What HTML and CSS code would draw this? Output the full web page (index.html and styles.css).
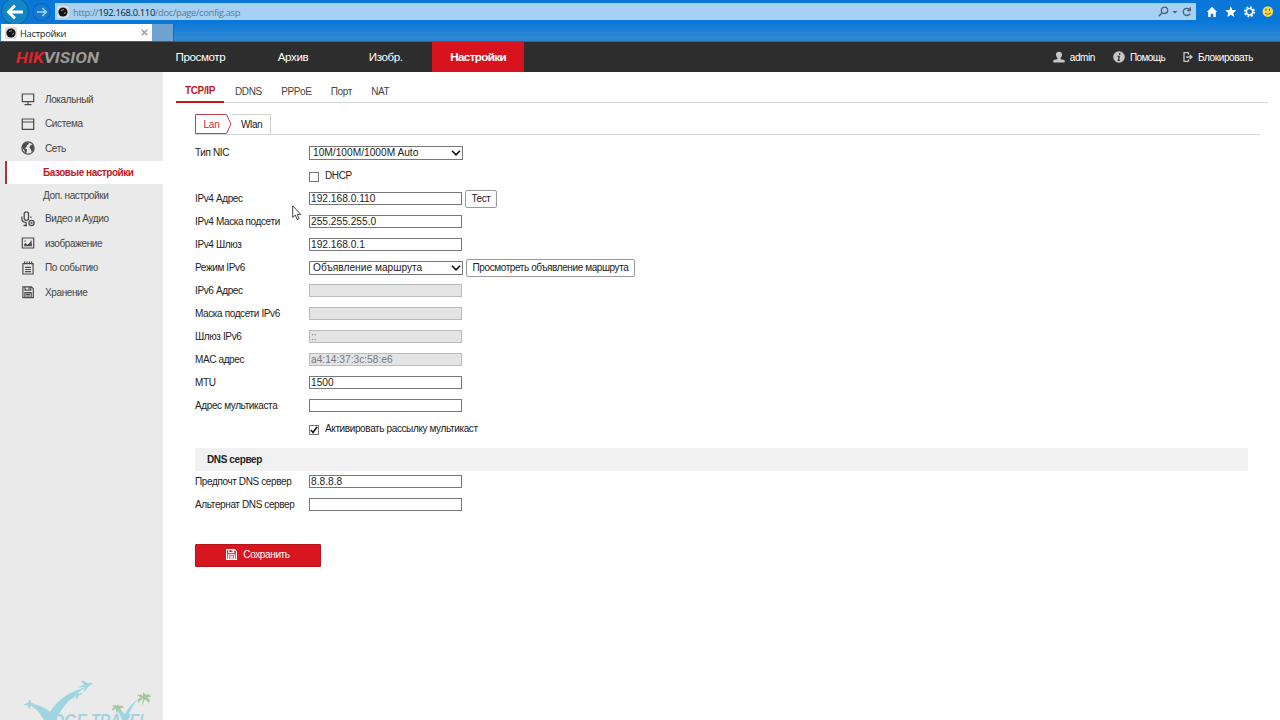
FILE: index.html
```html
<!DOCTYPE html>
<html lang="ru">

<head>
    <meta charset="UTF-8">
    <title>Настройки</title>
    <link rel="stylesheet" href="styles.css">
</head>

<body>
    <!-- Browser bar -->
    <div class="browser">
        <div class="address-row">
            <svg class="back" width="29" height="24" viewBox="0 0 29 24">
                <circle cx="15" cy="11.5" r="13.5" fill="#1186c4" stroke="#0a60a4" />
                <path d="M23 12H9M15 5.5L8.5 12l6.5 6.5" fill="none" stroke="#fff" stroke-width="3" />
            </svg>
            <svg class="forward" width="19" height="24" viewBox="0 0 19 24">
                <circle cx="9.5" cy="12" r="8.5" fill="#1379d3" stroke="#0b62b4" />
                <path d="M5 12h9M10.3 8l4 4-4 4" fill="none" stroke="#a9d6f6" stroke-width="1.5" />
            </svg>
            <div class="address">
                <svg class="favicon" width="12" height="12" viewBox="0 0 12 12">
                    <rect width="12" height="12" rx="2" fill="#ddd" />
                    <circle cx="6" cy="6" r="4.6" fill="#151515" />
                    <path d="M4 4.5l3-1M7 7.5l2-1" stroke="#999" />
                </svg>
                <span class="url">http://<b>192.168.0.110</b>/doc/page/config.asp</span>
                <svg class="address-tools" width="36" height="14" viewBox="0 0 36 14">
                    <g fill="none" stroke="#47637f" stroke-width="1.3">
                        <circle cx="7.5" cy="5.3" r="3.2" />
                        <path d="M5.2 7.7L1.7 11.3" />
                        <path d="M32.8 4.9A3.6 3.6 0 1 0 33 8.6M33.3 2.3v3.2h-3.2" />
                    </g>
                    <path d="M15.5 6h5L18 8.6z" fill="#47637f" />
                </svg>
            </div>
            <svg class="browser-icons" width="72" height="14" viewBox="0 0 72 14">
                <path d="M.9 7L6 1.8 11.1 7H9.8v5H7.3V8.7H4.7V12H2.2V7z" fill="#fff" />
                <path d="M24.8 1.2l1.5 3.8 4.1.3-3.1 2.7 1 4-3.5-2.2-3.5 2.2 1-4-3.1-2.7 4.1-.3z" fill="#fff" />
                <circle cx="43.5" cy="6.8" r="3.2" fill="none" stroke="#fff" stroke-width="1.5" />
                <circle cx="43.5" cy="6.8" r="4.7" fill="none" stroke="#fff" stroke-width="1.8" stroke-dasharray="1.8 1.89" />
                <circle cx="61.8" cy="6.6" r="5.3" fill="#fbd94e" />
                <path d="M59 8q2.8 3 5.6 0" fill="none" stroke="#8c6a12" />
                <path d="M60 3.8v2M63.5 3.8v2" stroke="#6d5211" stroke-width="1.1" />
            </svg>
        </div>
        <div class="tabs-row">
            <div class="browser-tab">
                <svg class="favicon" width="12" height="12" viewBox="0 0 12 12">
                    <rect width="12" height="12" rx="2" fill="#ddd" />
                    <circle cx="6" cy="6" r="4.6" fill="#151515" />
                    <path d="M4 4.5l3-1M7 7.5l2-1" stroke="#999" />
                </svg>
                <span>Настройки</span>
                <svg class="tab-close" width="7" height="7" viewBox="0 0 7 7">
                    <path d="M.7.7l5.6 5.6M6.3.7L.7 6.3" stroke="#999" stroke-width="1.3" />
                </svg>
            </div>
            <div class="new-tab"></div>
        </div>
    </div>

    <!-- Header -->
    <div class="header">
        <svg class="logo" width="90" height="22" viewBox="0 0 90 22">
            <text class="logo-text" x="0" y="16.5" textLength="83" lengthAdjust="spacingAndGlyphs"><tspan fill="#d8262d">HIK</tspan><tspan fill="#9b9b9b">VISION</tspan></text>
        </svg>
        <div class="menu">
            <a href="#">Просмотр</a>
            <a href="#">Архив</a>
            <a href="#">Изобр.</a>
            <a href="#" class="active">Настройки</a>
        </div>
        <div class="user-menu">
            <a href="#" class="user">
                <svg width="12" height="12" viewBox="0 0 12 12" fill="#c6c6c6">
                    <path d="M6 .8c-1.9 0-3 1.2-3 3 0 1.3.6 2.5 1.5 3.1v1.2L.3 9.3v2.2h11.4V9.3L7.5 8.1V6.9C8.4 6.3 9 5.1 9 3.8c0-1.8-1.1-3-3-3z" />
                </svg>
                <span>admin</span>
            </a>
            <a href="#" class="help">
                <svg width="12" height="12" viewBox="0 0 12 12">
                    <circle cx="6" cy="6" r="5.8" fill="#c6c6c6" />
                    <path d="M6.8 2.2L6.5 3.8M4.6 5.3h1.6l-.8 4h1.5" fill="none" stroke="#333" stroke-width="1.3" />
                </svg>
                <span>Помощь</span>
            </a>
            <a href="#" class="lock">
                <svg width="10" height="10" viewBox="0 0 10 10" fill="none" stroke="#c6c6c6" stroke-width="1.3">
                    <path d="M5.8.7H1v8.6h4.8M5.5.7v2M5.5 7.3v2M3.2 5h5.6M6.8 3l2.2 2-2.2 2" />
                </svg>
                <span>Блокировать</span>
            </a>
        </div>
    </div>

    <div class="page">
        <!-- Left menu -->
        <div class="sidebar">
            <a href="#" class="item">
                <svg width="14" height="14" viewBox="0 0 14 14" fill="none" stroke="#4b4b4b" stroke-width="1.2">
                    <path d="M1.3 2h11.4v7.6H1.3zM7 9.6v3M3.5 12.6h7" />
                </svg>
                <span>Локальный</span>
            </a>
            <a href="#" class="item">
                <svg width="14" height="14" viewBox="0 0 14 14" fill="none" stroke="#4b4b4b" stroke-width="1.2">
                    <path d="M1.3 2h11.4v10.4H1.3zM1.3 5h11.4" />
                </svg>
                <span>Система</span>
            </a>
            <a href="#" class="item">
                <svg width="14" height="14" viewBox="0 0 14 14">
                    <circle cx="7" cy="7" r="6.1" fill="none" stroke="#4b4b4b" stroke-width="1.2" />
                    <path d="M2 3.5L5 1.2l3 .6-.5 1.7L6 4l-.5 2.2L3.5 7l2.5 1.5-.5 3.3L4 12 3.3 9 .8 6.8zM9.5 4.2l2-.7 1.5 3-1 3-1.5 1.3L9.700 8 8.300 6.500z" fill="#4b4b4b" />
                </svg>
                <span>Сеть</span>
            </a>
            <a href="#" class="sub-item active">Базовые настройки</a>
            <a href="#" class="sub-item">Доп. настройки</a>
            <a href="#" class="item">
                <svg width="14" height="16" viewBox="0 0 14 16" fill="none" stroke="#4b4b4b" stroke-width="1.3">
                    <rect x="3.2" y=".8" width="4.3" height="8.5" rx="2.1" />
                    <path d="M.9 5.5v2q0 4 4.3 4M5.2 11.5v3M2.5 14.5H6M9.8 5.5v1.5" />
                    <circle cx="10.5" cy="12" r="2.6" />
                    <circle cx="10.5" cy="12" r=".4" />
                </svg>
                <span>Видео и Аудио</span>
            </a>
            <a href="#" class="item">
                <svg width="14" height="14" viewBox="0 0 14 14">
                    <path d="M1.3 2h11.4v10H1.3z" fill="none" stroke="#4b4b4b" stroke-width="1.2" />
                    <path d="M3.2 10.3V8l1.3-1 1.5 1.5h.8L9.5 6V4.5h1l.5 5.8zM3.5 4.5h1.2v1.2H3.5z" fill="#4b4b4b" />
                </svg>
                <span>изображение</span>
            </a>
            <a href="#" class="item">
                <svg width="14" height="14" viewBox="0 0 14 14" fill="none" stroke="#4b4b4b" stroke-width="1.2">
                    <path d="M1.9 2.5h10.2V13H1.9zM3.6.5v3M6 .5v3M8.4.5v3M10.7.5v3M4 6.3h6M4 8.5h6M4 10.7h6" />
                </svg>
                <span>По событию</span>
            </a>
            <a href="#" class="item">
                <svg width="14" height="14" viewBox="0 0 14 14" fill="none" stroke="#4b4b4b" stroke-width="1.2">
                    <path d="M1.9 1.8h8.5l1.9 1.9v8.9H1.9zM4 1.8v3.4h5.8V1.8M8 2.2v2M3.9 12.5V7.7h6.3v4.8M5 9.3h4M5 11h4" />
                </svg>
                <span>Хранение</span>
            </a>
            <!-- Watermark -->
            <svg class="watermark" width="140" height="42" viewBox="0 0 140 42">
                <g fill="#9fd4e1">
                    <path d="M5 26Q15 29 22 42h12Q42 23 64 9Q39 16 28 34Q18 25 5 26z" />
                    <path d="M32 42Q40 25 56 17Q43 19 35 29L27 42z" />
                    <path d="M55 9l7-2-3-4 2-.5 5 3 4-1 1 1-4 2.5-4 5-1.5.5 1.500-4.500-5 .5zM49 17l5-.5-2-3h1.500l3.500 2 3-.5v1l-3 1.500-2 3.500-1 .5.3-4-4.300.5zM1 26.500l5-1.500 1-3h1.500l.5 3 3 .5-3 2-1 3h-1.500V28z" />
                </g>
                <text class="mark-text" x="31" y="48.5" textLength="34" lengthAdjust="spacingAndGlyphs">DGE</text>
                <text class="mark-text" x="69" y="48.5" textLength="57" lengthAdjust="spacingAndGlyphs">TRAVEL</text>
                <path d="M93 31q5 4 7 11h5q4-16 15-24-12 8-17 18-4-4-10-6z" fill="#9fd4e1" />
                <path d="M120 28l1-8-5 5q-1-4 3-6l-4-1q3-3 6 0v-4l3 3q4-2 5 2h-4q4 3 2 6l-4-4zM94 36v-6l-4 3q0-4 3-4l-3-1q3-2 5 0l1-2 1 2q4-1 5 2h-4q2 2 1 4l-3-3z" fill="#a6c6a0" />
            </svg>
        </div>

        <!-- Settings -->
        <div class="content">
            <div class="tabs">
                <a href="#" class="tab active">TCP/IP</a>
                <a href="#" class="tab">DDNS</a>
                <a href="#" class="tab">PPPoE</a>
                <a href="#" class="tab">Порт</a>
                <a href="#" class="tab">NAT</a>
            </div>
            <div class="form">
                <div class="steps">
                    <svg class="step-shape" width="37" height="20" viewBox="0 0 37 20">
                        <path d="M.5.5h31l4.5 9.5-4.5 9.5H.5z" fill="#fff" stroke="#c4404a" />
                        <text class="step-text" x="8.5" y="13.5">Lan</text>
                    </svg>
                    <div class="step">Wlan</div>
                </div>

                <div class="row">
                    <label>Тип NIC</label>
                    <div class="select">10M/100M/1000M Auto<svg width="10" height="6" viewBox="0 0 10 6"><path d="M1 .8l4 4 4-4" /></svg></div>
                </div>
                <div class="row">
                    <label></label>
                    <span class="check"></span>
                    <span class="check-label">DHCP</span>
                </div>
                <div class="row">
                    <label>IPv4 Адрес</label>
                    <input type="text" value="192.168.0.110">
                    <button class="btn test">Тест</button>
                </div>
                <div class="row">
                    <label>IPv4 Маска подсети</label>
                    <input type="text" value="255.255.255.0">
                </div>
                <div class="row">
                    <label>IPv4 Шлюз</label>
                    <input type="text" value="192.168.0.1">
                </div>
                <div class="row">
                    <label>Режим IPv6</label>
                    <div class="select">Объявление маршрута<svg width="10" height="6" viewBox="0 0 10 6"><path d="M1 .8l4 4 4-4" /></svg></div>
                    <button class="btn route">Просмотреть объявление маршрута</button>
                </div>
                <div class="row">
                    <label>IPv6 Адрес</label>
                    <input type="text" disabled>
                </div>
                <div class="row">
                    <label>Маска подсети IPv6</label>
                    <input type="text" disabled>
                </div>
                <div class="row">
                    <label>Шлюз IPv6</label>
                    <input type="text" value="::" disabled>
                </div>
                <div class="row">
                    <label>MAC адрес</label>
                    <input type="text" value="a4:14:37:3c:58:e6" disabled>
                </div>
                <div class="row">
                    <label>MTU</label>
                    <input type="text" value="1500">
                </div>
                <div class="row">
                    <label>Адрес мультикаста</label>
                    <input type="text">
                </div>
                <div class="row">
                    <label></label>
                    <span class="check">
                        <svg width="8" height="8" viewBox="0 0 8 8"><path d="M.8 4l2.2 2.5L7.2.8" /></svg>
                    </span>
                    <span class="check-label">Активировать рассылку мультикаст</span>
                </div>

                <div class="section">DNS сервер</div>
                <div class="row">
                    <label>Предпочт DNS сервер</label>
                    <input type="text" value="8.8.8.8">
                </div>
                <div class="row">
                    <label>Альтернат DNS сервер</label>
                    <input type="text">
                </div>

                <button class="save">
                    <svg width="11" height="11" viewBox="0 0 11 11" fill="none" stroke="#fff" stroke-width="1.1">
                        <path d="M.6.6h8l1.8 1.8v8H.6zM2.8.6v3h5v-3M6.3 1v1.8M2.4 10.4V5.8h6.2v4.6M3.5 7.3h4M3.5 8.9h4" />
                    </svg>
                    <span>Сохранить</span>
                </button>
            </div>
        </div>
    </div>

    <svg class="cursor" width="10" height="16" viewBox="0 0 10 16">
        <path d="M.7.8v11.7l2.6-2.4 1.9 4.4 1.9-.8-1.9-4.3h3.6z" fill="#fff" stroke="#333" stroke-width=".9" />
    </svg>
</body>

</html>
```
FILE: styles.css
```css
* {
    box-sizing: border-box;
}

body {
    margin: 0;
    height: 720px;
    overflow: hidden;
    font-family: "Liberation Sans", Arial, sans-serif;
    font-size: 10px;
    letter-spacing: -0.38px;
    color: #222;
    background-color: #fff;
}

a {
    color: inherit;
    text-decoration: none;
}

svg {
    flex-shrink: 0;
}

/* Browser bar */
.browser {
    height: 42px;
    background: linear-gradient(#0877d7 0, #0877d7 22px, #3089d3 38px, #2b82cb 41px, #175080 42px);
    font-family: "Open Sans", "Noto Sans", sans-serif;
}

.address-row {
    display: flex;
    height: 24px;
}

.forward {
    margin-left: 3px;
}

.address {
    display: flex;
    align-items: center;
    width: 1141px;
    height: 17px;
    margin: 3px 0 0 4px;
    padding: 0 3px 0 2px;
    background-color: #a6d1f3;
}

.url {
    margin: 2px 0 0 4px;
    font-size: 9.4px;
    letter-spacing: -0.33px;
    color: #60788e;
}

.url b {
    font-weight: normal;
    color: #10202e;
}

.address-tools {
    margin-left: auto;
}

.browser-icons {
    margin: 5px 0 0 10px;
}

.tabs-row {
    display: flex;
    height: 17px;
}

.browser-tab {
    display: flex;
    align-items: center;
    width: 151px;
    margin-left: 1px;
    padding: 0 4px;
    font-size: 9.3px;
    letter-spacing: -0.28px;
    background-color: #fff;
}

.browser-tab span {
    margin: 1px 0 0 3px;
}

.tab-close {
    margin-left: auto;
}

.new-tab {
    width: 22px;
    background-color: #6fa4d2;
    border-right: 1px solid #2469a5;
}

/* Header */
.header {
    display: flex;
    align-items: center;
    height: 30px;
    background-color: #2d2d2d;
    color: #fff;
}

.logo {
    margin-left: 16px;
}

.logo-text {
    font-family: Roboto, "Liberation Sans", sans-serif;
    font-size: 15.5px;
    font-weight: bold;
    font-style: italic;
    letter-spacing: 0;
}

.menu {
    display: flex;
    margin-left: 48px;
    font-size: 11.6px;
    letter-spacing: -0.4px;
    line-height: 30px;
}

.menu a {
    width: 92.7px;
    text-align: center;
}

.menu .active {
    width: 92px;
    background-color: #d7141e;
    font-weight: bold;
    letter-spacing: -0.6px;
}

.user-menu {
    display: flex;
    margin-left: auto;
    padding-right: 27px;
    letter-spacing: -0.4px;
}

.user-menu a {
    display: flex;
    align-items: center;
}

.user-menu span {
    margin-left: 5px;
}

.help,
.lock {
    margin-left: 18px;
}

.help {
    letter-spacing: -0.6px;
}

/* Left menu */
.page {
    display: flex;
    height: 648px;
}

.sidebar {
    position: relative;
    width: 163px;
    padding-top: 15px;
    background-color: #eaeaea;
    color: #454545;
}

.item {
    display: flex;
    align-items: center;
    height: 24.5px;
    padding-left: 21px;
}

.item span {
    margin-left: 10px;
}

.sub-item {
    display: block;
    height: 23px;
    margin-left: 5px;
    padding-left: 38px;
    line-height: 23px;
}

.sub-item.active {
    padding-left: 36px;
    border-left: 2px solid #c12b35;
    background-color: #fff;
    color: #c31924;
    font-weight: bold;
    letter-spacing: -0.46px;
}

.watermark {
    position: absolute;
    left: 22px;
    bottom: 0;
}

.mark-text {
    font-size: 19px;
    font-weight: bold;
    font-style: italic;
    letter-spacing: 0;
    fill: #a5d2de;
}

/* Content */
.content {
    width: 1117px;
    padding: 8px 12px 0 13px;
}

.tabs {
    display: flex;
    height: 23px;
    border-bottom: 1px solid #d5d5d5;
    color: #444;
    line-height: 24px;
}

.tab {
    margin-right: 19.3px;
}

.tab.active {
    width: 48px;
    height: 23px;
    margin-right: 11px;
    border-bottom: 2px solid #bd1722;
    color: #c31924;
    font-weight: bold;
    line-height: 21px;
    text-align: center;
}

.form {
    padding: 11px 8px 0 19px;
}

.steps {
    display: flex;
    height: 21px;
    margin-bottom: 6px;
    border-bottom: 1px solid #d5d5d5;
}

.step-text {
    letter-spacing: -0.2px;
    fill: #c92a34;
}

.step {
    width: 39px;
    height: 20px;
    padding-left: 9px;
    border: 1px solid #d0d0d0;
    border-width: 1px 1px 0 0;
    line-height: 19px;
}

.row {
    display: flex;
    align-items: center;
    height: 23px;
}

.row label {
    width: 114px;
    white-space: nowrap;
}

.row input,
.select {
    width: 153px;
    height: 13px;
    padding: 0 1px;
    border: 1px solid #777;
    background-color: #fff;
    font-family: inherit;
    font-size: 10.2px;
    letter-spacing: 0;
    line-height: 11px;
    color: #222;
}

.row input:disabled {
    border-color: #bbb;
    background-color: #e4e4e4;
    color: #777;
}

.select {
    display: flex;
    align-items: center;
    justify-content: space-between;
    width: 154px;
    height: 14px;
    padding: 0 1px 0 3px;
}

.select svg {
    fill: none;
    stroke: #111;
    stroke-width: 1.6;
}

.check {
    display: flex;
    align-items: center;
    justify-content: center;
    width: 10px;
    height: 10px;
    margin-top: 2px;
    border: 1px solid #777;
}

.check svg {
    fill: none;
    stroke: #111;
    stroke-width: 1.5;
}

.check-label {
    margin-left: 6px;
}

.btn {
    height: 18px;
    margin-left: 3px;
    padding: 0;
    border: 1px solid #999;
    border-radius: 2px;
    background-color: #fff;
    font-family: inherit;
    font-size: 10px;
    letter-spacing: -0.41px;
    white-space: nowrap;
    color: #222;
}

.test {
    width: 32px;
}

.route {
    width: 169px;
}

.section {
    width: 1053px;
    height: 23px;
    margin: 8px 0 -1px;
    padding-left: 12px;
    background-color: #f1f1f1;
    font-weight: bold;
    line-height: 23px;
}

.save {
    display: flex;
    align-items: center;
    justify-content: center;
    width: 126px;
    height: 23px;
    margin-top: 28px;
    padding: 0 0 2px;
    border: 1px solid #b8121b;
    border-radius: 1px;
    background-color: #d8161f;
    color: #fff;
    font-family: inherit;
    font-size: 10px;
    letter-spacing: -0.37px;
}

.save span {
    margin-left: 6px;
}

.cursor {
    position: absolute;
    left: 292px;
    top: 205px;
}
```
